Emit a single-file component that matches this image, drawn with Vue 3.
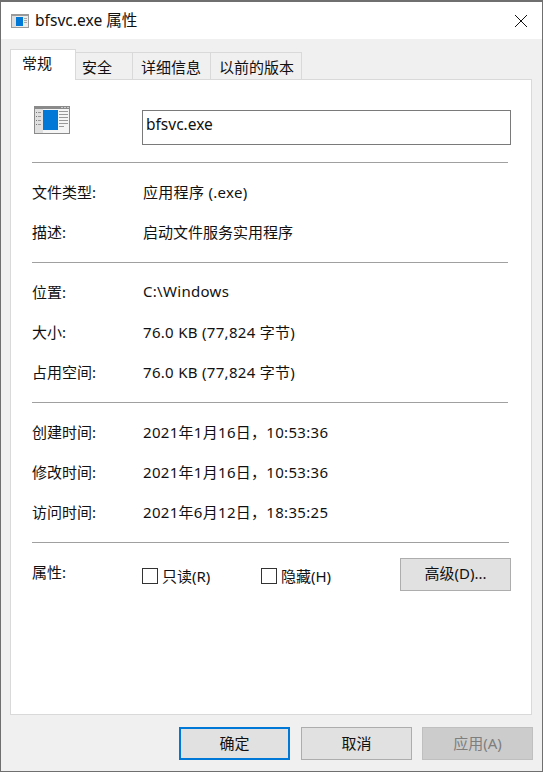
<script setup>
const groups = [
  [['文件类型:', '应用程序 (.exe)', true], ['描述:', '启动文件服务实用程序', false]],
  [['位置:', 'C:\\Windows', true], ['大小:', '76.0 KB (77,824 字节)', true], ['占用空间:', '76.0 KB (77,824 字节)', true]],
  [['创建时间:', '2021年1月16日，10:53:36', true], ['修改时间:', '2021年1月16日，10:53:36', true], ['访问时间:', '2021年6月12日，18:35:25', true]]
]
const tabs = ['安全', '详细信息', '以前的版本']
</script>

<template>
  <div class="win">
    <header class="title">
      <svg class="tico" width="18" height="14" viewBox="0 0 18 14">
        <rect width="18" height="14" fill="#9a9a9a" />
        <rect x="1" y="2" width="16" height="11" fill="#ececec" />
        <rect x="1" y="2" width="4" height="11" fill="#dcdcdc" />
        <rect x="5" y="3" width="7" height="9" fill="#0078d7" />
        <rect x="13" y="4" width="3" height="1" fill="#aaa" />
        <rect x="13" y="6" width="3" height="1" fill="#aaa" />
        <rect x="13" y="8" width="3" height="1" fill="#aaa" />
      </svg>
      <span class="ttext">bfsvc.exe 属性</span>
      <svg class="close" width="14" height="14" viewBox="0 0 14 14">
        <path d="M1 1 L13 13 M13 1 L1 13" stroke="#111" stroke-width="1" fill="none" />
      </svg>
    </header>

    <div class="body">
      <nav class="tabs">
        <div class="tab active">常规</div>
        <div v-for="t in tabs" :key="t" class="tab">{{ t }}</div>
      </nav>

      <main class="panel">
        <section class="head">
          <svg class="fico" width="36" height="28" viewBox="0 0 36 28">
            <rect width="36" height="28" fill="#8a8a8a" />
            <rect x="1" y="3" width="34" height="24" fill="#f5f5f5" />
            <rect x="1" y="3" width="8" height="24" fill="#e0e0e0" />
            <rect x="27" y="1" width="2" height="1" fill="#ccc" />
            <rect x="30" y="1" width="2" height="1" fill="#ccc" />
            <rect x="33" y="1" width="2" height="1" fill="#ccc" />
            <rect x="2" y="6" width="1" height="1" fill="#777" />
            <rect x="4" y="6" width="3" height="1" fill="#999" />
            <rect x="2" y="10" width="1" height="1" fill="#777" />
            <rect x="4" y="10" width="3" height="1" fill="#999" />
            <rect x="2" y="14" width="1" height="1" fill="#777" />
            <rect x="4" y="14" width="3" height="1" fill="#999" />
            <rect x="2" y="18" width="1" height="1" fill="#777" />
            <rect x="4" y="18" width="3" height="1" fill="#999" />
            <rect x="9" y="4" width="15" height="20" fill="#0078d7" />
            <rect x="25" y="5" width="9" height="1" fill="#999" />
            <rect x="25" y="8" width="9" height="1" fill="#999" />
            <rect x="25" y="11" width="9" height="1" fill="#999" />
            <rect x="25" y="14" width="9" height="1" fill="#999" />
            <rect x="25" y="17" width="9" height="1" fill="#999" />
            <rect x="25" y="20" width="5" height="1" fill="#999" />
          </svg>
          <div class="name">bfsvc.exe</div>
        </section>

        <section v-for="(g, i) in groups" :key="i" class="group">
          <div v-for="r in g" :key="r[0]" class="row">
            <span class="lab">{{ r[0] }}</span>
            <span :class="{ mixed: r[2] }">{{ r[1] }}</span>
          </div>
        </section>

        <section class="attrs">
          <span class="lab attr-lab">属性:</span>
          <div class="checks">
            <label class="chk ck1"><i class="box"></i>只读(R)</label>
            <label class="chk ck2"><i class="box"></i>隐藏(H)</label>
          </div>
          <button class="btn adv">高级(D)...</button>
        </section>
      </main>

      <footer class="foot">
        <button class="btn ok">确定</button>
        <button class="btn">取消</button>
        <button class="btn off">应用(A)</button>
      </footer>
    </div>
  </div>
</template>

<style scoped>
.win {
  width: 543px;
  height: 772px;
  box-sizing: border-box;
  border: 1px solid #6f6f6f;
  border-top-width: 2px;
  background: #fff;
  display: flex;
  flex-direction: column;
  font-family: "Noto Sans", "Noto Sans CJK SC", sans-serif;
  font-size: 15px;
  color: #111;
  overflow: hidden;
}
.title {
  height: 37px;
  flex: none;
  display: flex;
  align-items: center;
  padding: 0 14px 0 10px;
  box-sizing: border-box;
}
.tico { flex: none; margin-right: 6px; }
.ttext { font-size: 15.6px; flex: 1; padding-bottom: 2px; }
.close { flex: none; }
.body {
  flex: 1;
  background: #f0f0f0;
  display: flex;
  flex-direction: column;
  padding: 10px 10px 0 9px;
}
.tabs {
  display: flex;
  height: 30px;
  flex: none;
  align-items: flex-end;
  position: relative;
  z-index: 1;
}
.tab {
  height: 27px;
  box-sizing: border-box;
  border: 1px solid #d9d9d9;
  border-left: 0;
  border-bottom: 0;
  background: #f0f0f0;
  padding: 0 6px;
  display: flex;
  align-items: center;
  margin-bottom: 0;
}
.tab.active {
  height: 31px;
  margin-bottom: -1px;
  background: #fff;
  border-left: 1px solid #d9d9d9;
  padding: 0 12px 5px 11px;
  width: 66px;
}
.tab:nth-child(2) { width: 57px; padding-left: 6px; }
.tab:nth-child(3) { width: 78px; padding-left: 8px; }
.tab:nth-child(4) { width: 91px; padding-left: 8px; }
.panel {
  height: 636px;
  flex: none;
  box-sizing: border-box;
  border: 1px solid #d9d9d9;
  background: #fff;
  padding: 0 22px 0 21px;
  display: flex;
  flex-direction: column;
}
.head {
  height: 82px;
  flex: none;
  box-sizing: border-box;
  display: flex;
  align-items: flex-start;
  padding-top: 26px;
}
.fico { flex: none; margin-left: 2px; margin-right: 72px; }
.name {
  width: 369px;
  height: 35px;
  flex: none;
  margin-top: 4px;
  margin-right: -3px;
  box-sizing: border-box;
  border: 1px solid #7a7a7a;
  padding: 0 3px 8px;
  display: flex;
  align-items: center;
  font-size: 15.5px;
}
.group {
  border-top: 1px solid #a0a0a0;
  padding: 10px 0 9px;
  margin-right: 1px;
  display: flex;
  flex-direction: column;
}
.row {
  height: 40px;
  box-sizing: border-box;
  padding-bottom: 4px;
  display: flex;
  align-items: center;
}
.lab {
  width: 111px;
  flex: none;
}
.attr-lab { width: 110px; margin-top: 4px; line-height: 20px; }
.mixed { letter-spacing: 0.3px; }
.attrs {
  border-top: 1px solid #a0a0a0;
  display: flex;
  align-items: flex-start;
  padding-top: 15px;
}
.checks { display: flex; flex: 1; padding-top: 8px; }
.chk {
  display: flex;
  align-items: center;
  gap: 4px;
  line-height: 20px;
}
.ck1 { width: 119px; }
.box {
  width: 16px;
  height: 16px;
  box-sizing: border-box;
  border: 1px solid #333;
  background: #fff;
  flex: none;
}
.btn {
  width: 111px;
  height: 33px;
  flex: none;
  box-sizing: border-box;
  border: 1px solid #adadad;
  background: #e1e1e1;
  font: inherit;
  color: #111;
  padding: 0 0 2px;
  margin: 0;
}
.adv { margin-right: -2px; padding-bottom: 4px; }
.foot {
  display: flex;
  justify-content: flex-end;
  gap: 11px;
  padding-top: 12px;
  margin-right: -1px;
}
.ok { border: 2px solid #0078d7; }
.off {
  margin-left: -1px;
  background: #ccc;
  border-color: #bfbfbf;
  color: #7e7e7e;
}
</style>
